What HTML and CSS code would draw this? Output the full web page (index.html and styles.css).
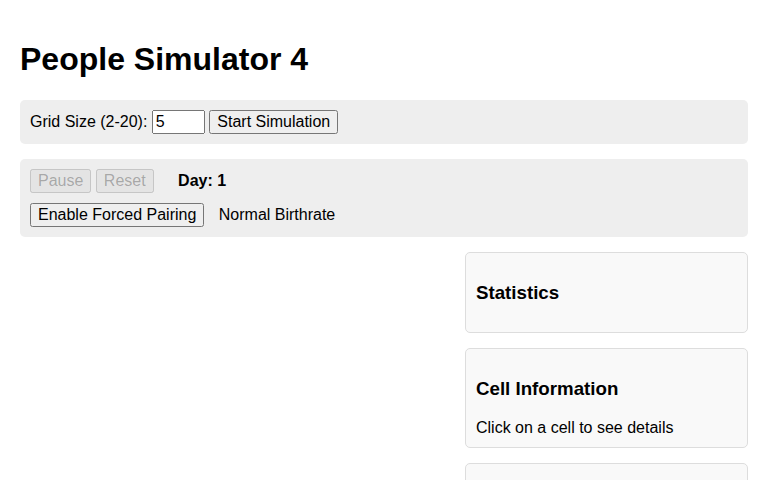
FILE: index.html
```html
<!DOCTYPE html>
<html>
<head>
<meta charset="utf-8">
<title>People Simulator 4</title>
<link rel="stylesheet" href="styles.css">
</head>
<body>
<h1 class="title">People Simulator 4</h1>
<div class="panel">
  <label class="label" for="size">Grid Size (2-20):</label>
  <input id="size" class="size-input" type="number" value="5">
  <button class="btn">Start Simulation</button>
</div>
<div class="panel">
  <div class="row">
    <button class="btn" disabled>Pause</button>
    <button class="btn" disabled>Reset</button>
    <span class="day">Day: 1</span>
  </div>
  <div class="row row-last">
    <button class="btn">Enable Forced Pairing</button>
    <span class="rate">Normal Birthrate</span>
  </div>
</div>
<div class="main">
  <div class="grid-area"></div>
  <div class="sidebar">
    <div class="card">
      <h3 class="card-title">Statistics</h3>
      <div class="stats"></div>
    </div>
    <div class="card">
      <h3 class="card-title">Cell Information</h3>
      <div class="cell-info">Click on a cell to see details</div>
    </div>
    <div class="card card-more"></div>
  </div>
</div>
</body>
</html>
```
FILE: styles.css
```css
body {
  margin: 0;
  padding: 20px;
  font-family: "Liberation Sans", Arial, sans-serif;
  font-size: 16px;
  color: #000;
  background: #fff;
}
.title {
  font-size: 32px;
  margin: 21.44px 0;
}
.panel {
  background: #eeeeee;
  border-radius: 5px;
  padding: 10px;
  margin-bottom: 15px;
}
.label {
  font-size: 16px;
}
.size-input {
  font-family: "Liberation Sans", Arial, sans-serif;
  font-size: 16px;
  width: 53px;
  box-sizing: border-box;
}
.size-input::-webkit-inner-spin-button,
.size-input::-webkit-outer-spin-button {
  -webkit-appearance: none;
  margin: 0;
}
.btn {
  font-family: "Liberation Sans", Arial, sans-serif;
  font-size: 16px;
}
.row {
  margin-bottom: 10px;
}
.row-last {
  margin-bottom: 0;
}
.day {
  font-weight: bold;
  margin-left: 20px;
}
.rate {
  margin-left: 10px;
}
.main {
  display: flex;
  justify-content: space-between;
}
.grid-area {
  flex: 1;
}
.sidebar {
  width: 283px;
  flex: 0 0 283px;
}
.card {
  background: #f9f9f9;
  border: 1px solid #ddd;
  border-radius: 5px;
  padding: 10px;
  margin-bottom: 15px;
}
.card-more {
  min-height: 60px;
}
.card-title {
  font-size: 18.72px;
  margin: 18.72px 0;
}
.cell-info {
  margin: 0;
}
```
